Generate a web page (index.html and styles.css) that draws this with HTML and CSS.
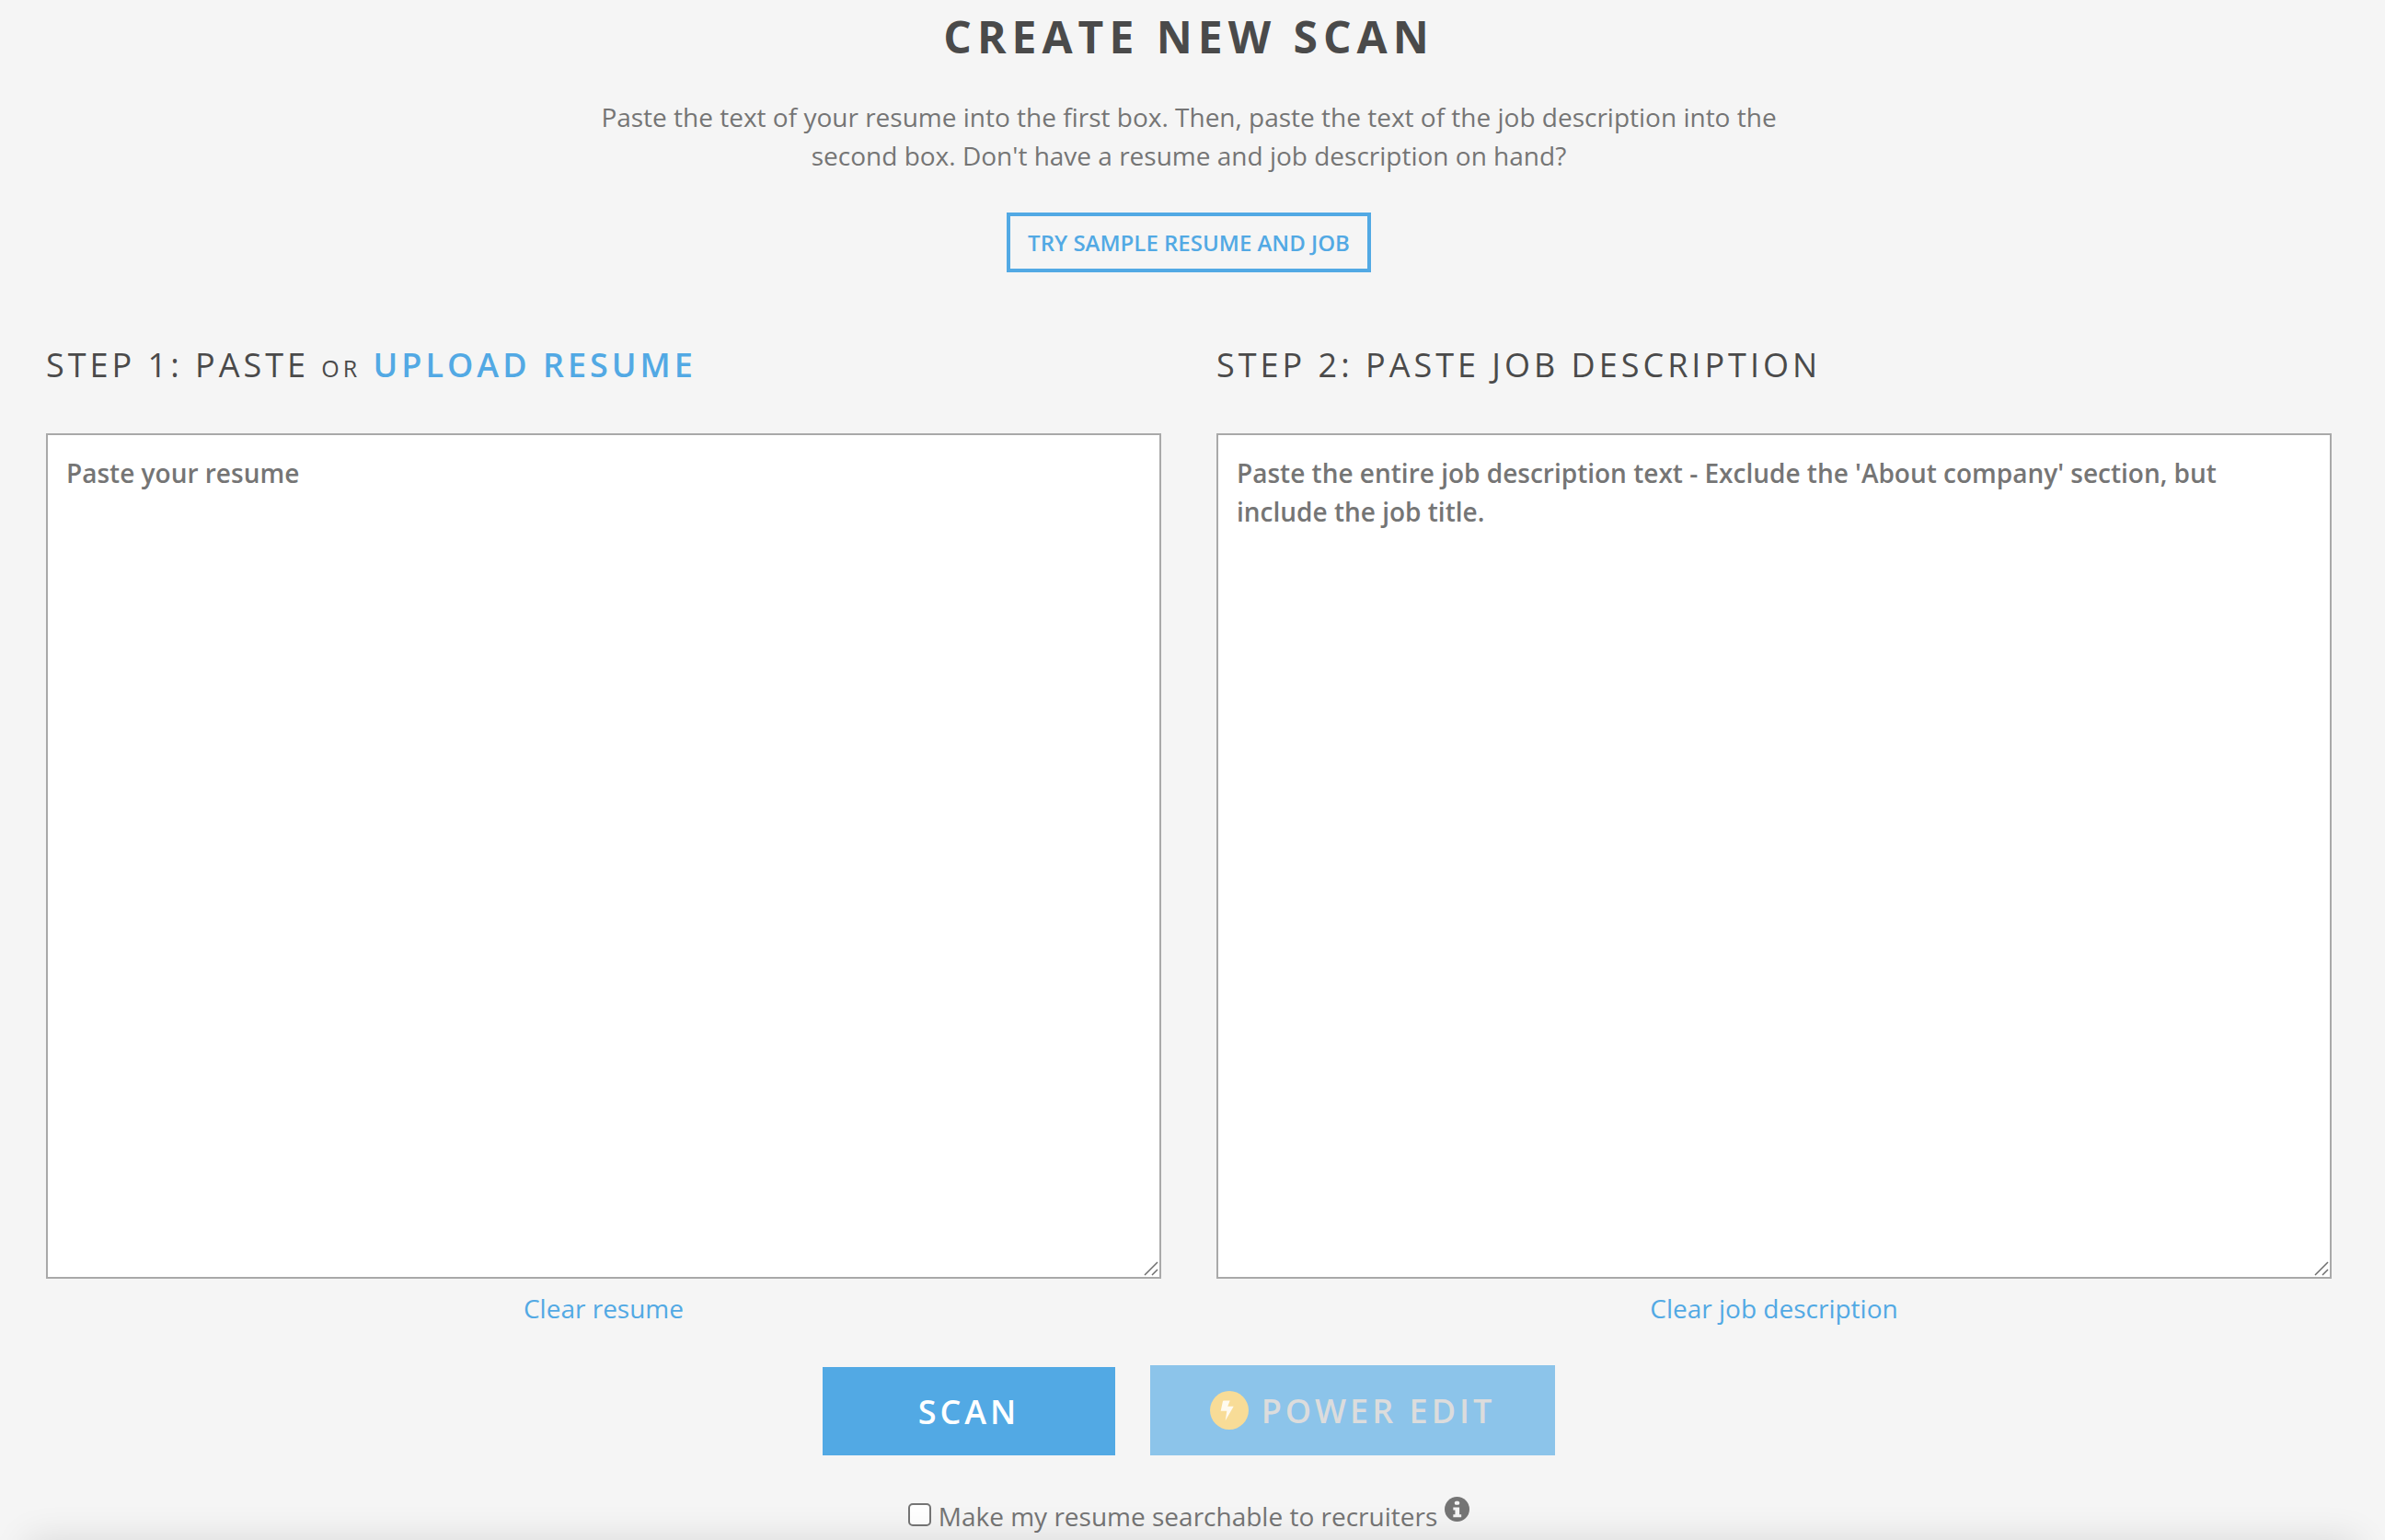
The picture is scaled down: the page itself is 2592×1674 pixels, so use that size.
FILE: index.html
```html
<!DOCTYPE html>
<html lang="en">
<head>
    <meta charset="UTF-8">
    <meta name="viewport" content="width=device-width, initial-scale=1.0">
    <title>Create new scan</title>
    <link rel="stylesheet" href="styles.css">
</head>
<body>
    <div class="scan-page">
        <h1 class="scan-title">CREATE NEW SCAN</h1>
        <p class="scan-intro">Paste the text of your resume into the first box. Then, paste the text of the job description into the second box. Don't have a resume and job description on hand?</p>
        <a class="sample-button" href="#">TRY SAMPLE RESUME AND JOB</a>

        <div class="scan-columns">
            <div class="scan-column">
                <h2 class="step-title">STEP 1: PASTE <span class="step-or">OR</span> <a href="#">UPLOAD RESUME</a></h2>
                <div class="input-wrap">
                    <textarea class="scan-input" placeholder="Paste your resume"></textarea>
                    <svg class="resize-grip" viewBox="0 0 16 16" aria-hidden="true">
                        <path d="M1 15L15 1M9 15l6-6" stroke="#6e6e6e" stroke-width="1.500" fill="none"/>
                    </svg>
                </div>
                <a class="clear-link" href="#">Clear resume</a>
            </div>
            <div class="scan-column">
                <h2 class="step-title">STEP 2: PASTE JOB DESCRIPTION</h2>
                <div class="input-wrap">
                    <textarea class="scan-input" placeholder="Paste the entire job description text - Exclude the 'About company' section, but include the job title."></textarea>
                    <svg class="resize-grip" viewBox="0 0 16 16" aria-hidden="true">
                        <path d="M1 15L15 1M9 15l6-6" stroke="#6e6e6e" stroke-width="1.500" fill="none"/>
                    </svg>
                </div>
                <a class="clear-link" href="#">Clear job description</a>
            </div>
        </div>

        <div class="scan-actions">
            <button class="scan-button" type="button">SCAN</button>
            <button class="power-button" type="button">
                <svg class="power-icon" viewBox="0 0 42 42" aria-hidden="true">
                    <circle cx="21" cy="21" r="21" fill="#f8dc97"/>
                    <path d="M14 11q.2-.6 1-.6h6.700l-2.400 6.300h6.400l-9 15.600 1.600-10.600h-6.600z" fill="#fefaf0"/>
                </svg>
                POWER EDIT
            </button>
        </div>

        <label class="searchable">
            <input type="checkbox">
            <span>Make my resume searchable to recruiters</span>
            <svg class="info-icon" viewBox="0 0 26 26" aria-hidden="true">
                <circle cx="13" cy="13" r="13" fill="#757575"/>
                <rect x="10.500" y="4.500" width="5" height="4" rx="1.500" fill="#f5f5f5"/>
                <path d="M9 11h6.500v7.500H17.500V21.500H9V18.500h2V14H9z" fill="#f5f5f5"/>
            </svg>
        </label>
    </div>
    <div class="bottom-shadow"></div>
</body>
</html>
```

FILE: styles.css
```css
html, body {
    height: 100%;
}

body {
    margin: 0;
    background-color: #f5f5f5;
    font-family: "Open Sans", sans-serif;
    color: #757575;
    overflow: hidden;
}

a {
    color: #52a9e4;
    text-decoration: none;
}

.scan-page {
    display: flex;
    flex-direction: column;
    align-items: center;
    padding: 12px 58px 0 50px;
}

.scan-title {
    margin: 0;
    font-size: 48px;
    line-height: 56px;
    font-weight: 700;
    letter-spacing: 6px;
    color: #4a4a4a;
}

.scan-intro {
    width: 1300px;
    margin: 38px 0 0;
    font-size: 28px;
    line-height: 42px;
    text-align: center;
}

.sample-button {
    margin-top: 41px;
    padding: 0 19px;
    border: 4px solid #52a9e4;
    font-size: 24px;
    line-height: 57px;
    font-weight: 600;
}

.scan-columns {
    display: flex;
    gap: 60px;
    width: 100%;
    margin-top: 76px;
}

.scan-column {
    flex: 1;
    display: flex;
    flex-direction: column;
    align-items: center;
}

.step-title {
    align-self: flex-start;
    height: 50px;
    margin: 0;
    font-size: 36px;
    line-height: 50px;
    font-weight: 400;
    letter-spacing: 4px;
    color: #4a4a4a;
}

.step-title a {
    font-weight: 600;
}

.step-or {
    font-size: 25px;
}

.input-wrap {
    position: relative;
    display: flex;
    width: 100%;
    margin-top: 49px;
}

.scan-input {
    width: 100%;
    height: 919px;
    padding: 20px;
    border: 2px solid #a9a9a9;
    border-radius: 0;
    box-sizing: border-box;
    background-color: #fff;
    font-family: "Open Sans", sans-serif;
    font-size: 28px;
    line-height: 42px;
    outline: none;
    resize: none;
}

.scan-input::placeholder {
    color: #757575;
    font-weight: 600;
    opacity: 1;
}

.resize-grip {
    position: absolute;
    right: 3px;
    bottom: 3px;
    width: 16px;
    height: 16px;
    pointer-events: none;
}

.clear-link {
    margin-top: 11px;
    font-size: 28px;
    line-height: 42px;
}

.scan-actions {
    display: flex;
    align-items: flex-end;
    gap: 38px;
    margin-top: 41px;
}

.scan-button, .power-button {
    border: none;
    border-radius: 0;
    font-family: "Open Sans", sans-serif;
    font-size: 36px;
    font-weight: 600;
    letter-spacing: 4px;
    cursor: pointer;
}

.scan-button {
    width: 318px;
    height: 96px;
    background-color: #52a9e4;
    color: #fff;
}

.power-button {
    display: flex;
    align-items: center;
    justify-content: center;
    gap: 14px;
    width: 440px;
    height: 98px;
    background-color: #8cc4ea;
    color: #dcdcdc;
}

.power-icon {
    width: 42px;
    height: 42px;
}

.searchable {
    display: flex;
    align-items: center;
    margin-top: 45px;
    font-size: 28px;
    line-height: 42px;
}

.searchable input {
    appearance: none;
    width: 25px;
    height: 25px;
    margin: -4px 8px 0 0;
    border: 2px solid #757575;
    border-radius: 5px;
    box-sizing: border-box;
    background-color: #fff;
}

.info-icon {
    width: 27px;
    height: 27px;
    margin: -16px 0 0 8px;
}

.bottom-shadow {
    position: fixed;
    left: 30px;
    right: 30px;
    bottom: -40px;
    height: 40px;
    box-shadow: 0 0 40px rgba(0, 0, 0, 0.12);
}
```
